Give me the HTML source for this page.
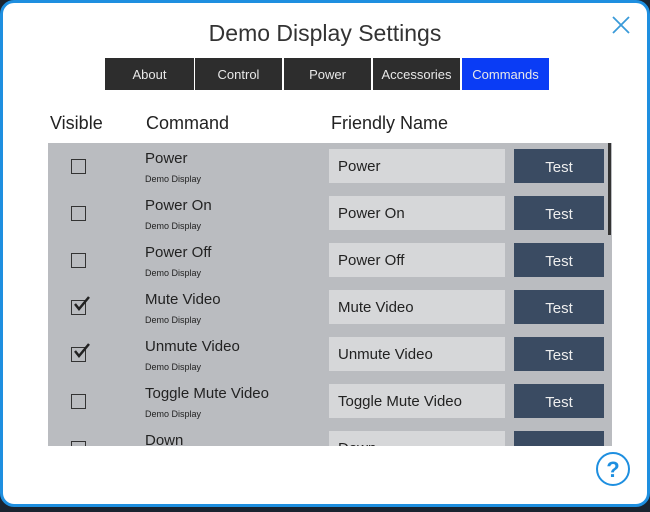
<!DOCTYPE html>
<html><head><style>
*{margin:0;padding:0;box-sizing:border-box}
body{width:650px;height:512px;background:#1a2430;position:relative;overflow:hidden;font-family:"Liberation Sans","DejaVu Sans",sans-serif}
.panel{position:absolute;left:0;top:0;width:650px;height:507px;background:#fff;border:3px solid #1e8fe0;border-radius:14px}
.title{position:absolute;left:0;width:650px;top:20px;text-align:center;font-size:23px;color:#333}
.tab{position:absolute;top:58px;height:32px;background:#2d2d2d;color:#e8e8e8;font-size:13px;text-align:center;line-height:33px}
.hdr{position:absolute;top:113px;font-size:18px;color:#222}
.tbl{position:absolute;left:48px;top:143px;width:564px;height:303px;background:#babcc0;overflow:hidden}
.sb{position:absolute;left:608px;top:143px;width:3px;height:92px;background:#333}
.row{position:absolute;left:0;width:564px;height:47px}
.cb{position:absolute;left:23px;top:16px;width:15px;height:15px;border:1.6px solid #333}
.cmd{position:absolute;left:97px;top:7px;font-size:15px;color:#222}
.sub{position:absolute;left:97px;top:31px;font-size:9px;color:#222}
.inp{position:absolute;left:281px;top:6px;width:176px;height:34px;background:#d6d7d9;font-size:15px;color:#222;line-height:36px;padding-left:9px}
.btn{position:absolute;left:466px;top:6px;width:90px;height:34px;background:#3a4b62;color:#eee;font-size:15px;line-height:37px;text-align:center}
</style></head><body>
<div class="panel"></div>
<div class="title">Demo Display Settings</div>
<svg style="position:absolute;left:611px;top:15px" width="20" height="20"><path d="M2 2L18 18M18 2L2 18" stroke="#3a9ad9" stroke-width="1.8"/></svg>
<div class="tab" style="left:105px;width:89px">About</div>
<div class="tab" style="left:195px;width:87px">Control</div>
<div class="tab" style="left:284px;width:87px">Power</div>
<div class="tab" style="left:373px;width:87px">Accessories</div>
<div class="tab" style="left:462px;width:87px;background:#0a3cf5">Commands</div>
<div class="hdr" style="left:50px">Visible</div>
<div class="hdr" style="left:146px">Command</div>
<div class="hdr" style="left:331px">Friendly Name</div>
<div class="tbl">
<div class="row" style="top:0"><div class="cb"></div><div class="cmd">Power</div><div class="sub">Demo Display</div><div class="inp">Power</div><div class="btn">Test</div></div>
<div class="row" style="top:47px"><div class="cb"></div><div class="cmd">Power On</div><div class="sub">Demo Display</div><div class="inp">Power On</div><div class="btn">Test</div></div>
<div class="row" style="top:94px"><div class="cb"></div><div class="cmd">Power Off</div><div class="sub">Demo Display</div><div class="inp">Power Off</div><div class="btn">Test</div></div>
<div class="row" style="top:141px"><div class="cb"></div><svg style="position:absolute;left:24px;top:10px" width="20" height="18"><path d="M3 10L7 15L17 3" stroke="#222" stroke-width="2.5" fill="none"/></svg><div class="cmd">Mute Video</div><div class="sub">Demo Display</div><div class="inp">Mute Video</div><div class="btn">Test</div></div>
<div class="row" style="top:188px"><div class="cb"></div><svg style="position:absolute;left:24px;top:10px" width="20" height="18"><path d="M3 10L7 15L17 3" stroke="#222" stroke-width="2.5" fill="none"/></svg><div class="cmd">Unmute Video</div><div class="sub">Demo Display</div><div class="inp">Unmute Video</div><div class="btn">Test</div></div>
<div class="row" style="top:235px"><div class="cb"></div><div class="cmd">Toggle Mute Video</div><div class="sub">Demo Display</div><div class="inp">Toggle Mute Video</div><div class="btn">Test</div></div>
<div class="row" style="top:282px"><div class="cb"></div><div class="cmd">Down</div><div class="inp">Down</div><div class="btn"></div></div>
</div>
<div class="sb"></div>
<svg style="position:absolute;left:595px;top:451px" width="36" height="36"><circle cx="18" cy="18" r="16" fill="none" stroke="#1e8fe0" stroke-width="2"/><text x="18" y="26" text-anchor="middle" font-family="Liberation Sans" font-weight="bold" font-size="22" fill="#1e8fe0">?</text></svg>
</body></html>
